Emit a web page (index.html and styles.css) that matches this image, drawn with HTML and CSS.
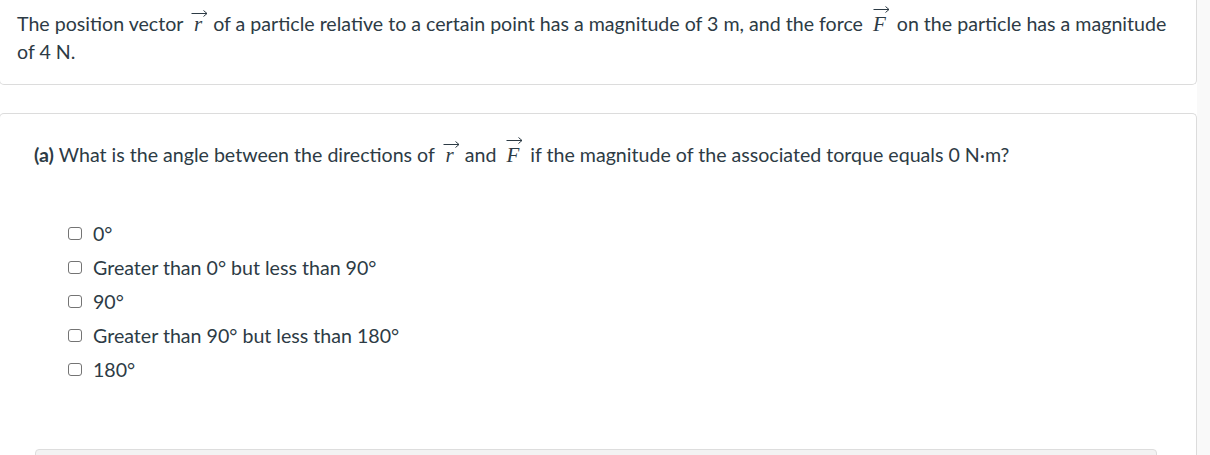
FILE: index.html
```html
<!DOCTYPE html>
<html>
<head>
<meta charset="utf-8">
<link rel="stylesheet" href="styles.css">
</head>
<body>
<div class="page">
  <main class="main">
    <section class="card card-intro">
      <p class="text">The position vector <span class="vec vec-r">r<svg class="arrow" viewBox="0 0 17 7" width="17" height="7"><path d="M0.5 3.5H16M12.5 0.5L16 3.5L12.5 6.5" fill="none" stroke="#2d3b45" stroke-width="1"/></svg></span> of a particle relative to a certain point has a magnitude of 3 m, and the force <span class="vec vec-f">F<svg class="arrow" viewBox="0 0 17 7" width="17" height="7"><path d="M0.5 3.5H16M12.5 0.5L16 3.5L12.5 6.5" fill="none" stroke="#2d3b45" stroke-width="1"/></svg></span> on the particle has a magnitude of 4 N.</p>
    </section>
    <section class="card card-question">
      <p class="text question"><b>(a)</b> What is the angle between the directions of <span class="vec vec-r">r<svg class="arrow" viewBox="0 0 17 7" width="17" height="7"><path d="M0.5 3.5H16M12.5 0.5L16 3.5L12.5 6.5" fill="none" stroke="#2d3b45" stroke-width="1"/></svg></span> and <span class="vec vec-f">F<svg class="arrow" viewBox="0 0 17 7" width="17" height="7"><path d="M0.5 3.5H16M12.5 0.5L16 3.5L12.5 6.5" fill="none" stroke="#2d3b45" stroke-width="1"/></svg></span> if the magnitude of the associated torque equals 0 N·m?</p>
      <ul class="options">
        <li class="option"><span class="box"></span><span>0°</span></li>
        <li class="option"><span class="box"></span><span>Greater than 0° but less than 90°</span></li>
        <li class="option"><span class="box"></span><span>90°</span></li>
        <li class="option"><span class="box"></span><span>Greater than 90° but less than 180°</span></li>
        <li class="option"><span class="box"></span><span>180°</span></li>
      </ul>
      <div class="answer-box"></div>
    </section>
  </main>
  <aside class="strip"></aside>
</div>
</body>
</html>
```
FILE: styles.css
```css
html, body {
  margin: 0;
  padding: 0;
  background: #ffffff;
  overflow: hidden;
}
body {
  font-family: Lato, "Open Sans", sans-serif;
  color: #2d3b45;
  font-size: 19.6px;
  line-height: 27.6px;
}
.page {
  display: flex;
  height: 455px;
}
.main {
  width: 1197px;
  flex: none;
  background: #ffffff;
}
.strip {
  flex: 1;
  background: #f9f9f9;
}
.card {
  margin-left: -1px;
  border: 1px solid #dcdcdc;
  border-radius: 5px;
  background: #ffffff;
}
.card-intro {
  border-top: none;
  border-top-left-radius: 0;
  border-top-right-radius: 0;
  padding: 10px 17px 18.8px 17px;
}
.text {
  margin: 0;
}
.card-question {
  margin-top: 28px;
  padding: 27px 34px 0 34px;
  border-bottom: none;
  height: 400px;
}
.question b {
  font-weight: 700;
}
.vec {
  position: relative;
  display: inline-block;
  font-family: "Liberation Serif", "DejaVu Serif", serif;
  font-style: italic;
  font-size: 21px;
  line-height: 21px;
}
.vec-r {
  padding-left: 6px;
  padding-right: 6px;
}
.vec-f {
  padding-left: 5px;
  padding-right: 6px;
}
.vec .arrow {
  position: absolute;
  left: 3px;
  top: -4px;
}
.vec-f .arrow {
  left: 5px;
  top: -8px;
}
.options {
  list-style: none;
  margin: 48px 0 0 34px;
  padding: 0;
}
.option {
  display: flex;
  align-items: center;
  gap: 11px;
  height: 34px;
}
.box {
  width: 12px;
  height: 11px;
  border: 1px solid #747474;
  border-radius: 3px;
  flex: none;
  box-sizing: content-box;
}
.answer-box {
  margin: 62px 5px 0 1px;
  height: 40px;
  background: #f3f3f3;
  border: 1px solid #dddddd;
  border-radius: 4px;
}
```
